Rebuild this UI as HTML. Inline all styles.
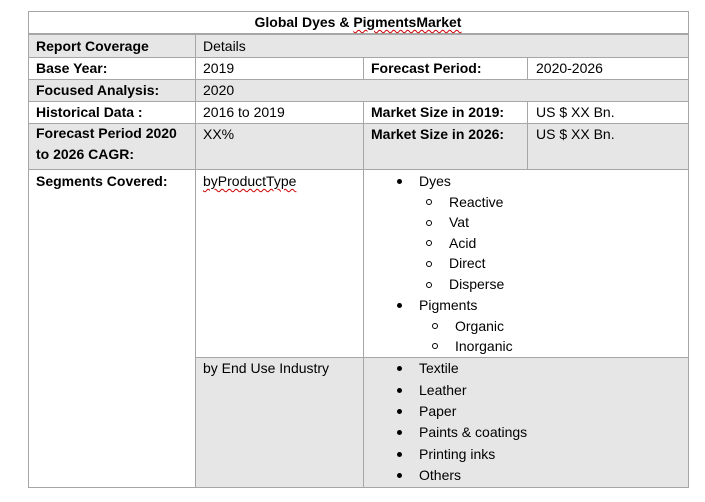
<!DOCTYPE html>
<html><head><style>
body{margin:0;width:705px;height:502px;background:#fff;font-family:"Liberation Sans",sans-serif;font-size:14px;color:#000;position:relative;overflow:hidden}
.b{position:absolute;background:#a6a6a6}
.g{position:absolute;background:#e7e6e6}
.t{position:absolute;white-space:nowrap;line-height:16px}
.bd{font-weight:bold}
.dot{position:absolute;width:5px;height:5px;border-radius:50%;background:#000}
.cir{position:absolute;width:6px;height:6px;border-radius:50%;border:1.3px solid #000;box-sizing:border-box}
.u{text-decoration:underline wavy #c00;text-decoration-thickness:1px;text-underline-offset:2px}
</style></head><body>
<div class="g" style="left:28px;top:35px;width:660px;height:22px"></div>
<div class="g" style="left:28px;top:79px;width:660px;height:22px"></div>
<div class="g" style="left:28px;top:123px;width:660px;height:46px"></div>
<div class="g" style="left:195px;top:357px;width:493px;height:130px"></div>

<div class="b" style="left:28px;top:11px;width:661px;height:1px"></div>
<div class="b" style="left:28px;top:33px;width:661px;height:2px"></div>
<div class="b" style="left:28px;top:57px;width:661px;height:1px"></div>
<div class="b" style="left:28px;top:79px;width:661px;height:1px"></div>
<div class="b" style="left:28px;top:101px;width:661px;height:1px"></div>
<div class="b" style="left:28px;top:123px;width:661px;height:1px"></div>
<div class="b" style="left:28px;top:169px;width:661px;height:1px"></div>
<div class="b" style="left:195px;top:357px;width:494px;height:1px"></div>
<div class="b" style="left:28px;top:487px;width:661px;height:1px"></div>
<div class="b" style="left:28px;top:11px;width:1px;height:477px"></div>
<div class="b" style="left:688px;top:11px;width:1px;height:477px"></div>
<div class="b" style="left:195px;top:35px;width:1px;height:452px"></div>
<div class="b" style="left:363px;top:57px;width:1px;height:22px"></div>
<div class="b" style="left:363px;top:101px;width:1px;height:386px"></div>
<div class="b" style="left:527px;top:57px;width:1px;height:22px"></div>
<div class="b" style="left:527px;top:101px;width:1px;height:68px"></div>

<div class="t bd" style="left:0;width:716px;text-align:center;top:14px">Global Dyes &amp; <span class="u">PigmentsMarket</span></div>
<div class="t bd" style="left:36px;top:38px">Report Coverage</div>
<div class="t" style="left:203px;top:38px">Details</div>
<div class="t bd" style="left:36px;top:60px">Base Year:</div>
<div class="t" style="left:203px;top:60px">2019</div>
<div class="t bd" style="left:371px;top:60px">Forecast Period:</div>
<div class="t" style="left:536px;top:60px">2020-2026</div>
<div class="t bd" style="left:36px;top:82px">Focused Analysis:</div>
<div class="t" style="left:203px;top:82px">2020</div>
<div class="t bd" style="left:36px;top:104px">Historical Data :</div>
<div class="t" style="left:203px;top:104px">2016 to 2019</div>
<div class="t bd" style="left:371px;top:104px">Market Size in 2019:</div>
<div class="t" style="left:536px;top:104px">US $ XX Bn.</div>
<div class="t bd" style="left:36px;top:123px;line-height:21px">Forecast Period 2020<br>to 2026 CAGR:</div>
<div class="t" style="left:203px;top:126px">XX%</div>
<div class="t bd" style="left:371px;top:126px">Market Size in 2026:</div>
<div class="t" style="left:536px;top:126px">US $ XX Bn.</div>
<div class="t bd" style="left:36px;top:173px">Segments Covered:</div>
<div class="t" style="left:203px;top:173px"><span class="u">byProductType</span></div>
<div class="t" style="left:203px;top:360px">by End Use Industry</div>

<div class="dot" style="left:397px;top:179px"></div><div class="t" style="left:419px;top:173px">Dyes</div>
<div class="cir" style="left:426px;top:199px"></div><div class="t" style="left:449px;top:194px">Reactive</div>
<div class="cir" style="left:426px;top:220px"></div><div class="t" style="left:449px;top:214px">Vat</div>
<div class="cir" style="left:426px;top:240px"></div><div class="t" style="left:449px;top:235px">Acid</div>
<div class="cir" style="left:426px;top:261px"></div><div class="t" style="left:449px;top:255px">Direct</div>
<div class="cir" style="left:426px;top:282px"></div><div class="t" style="left:449px;top:276px">Disperse</div>
<div class="dot" style="left:397px;top:303px"></div><div class="t" style="left:419px;top:297px">Pigments</div>
<div class="cir" style="left:432px;top:323px"></div><div class="t" style="left:455px;top:318px">Organic</div>
<div class="cir" style="left:432px;top:343px"></div><div class="t" style="left:455px;top:338px">Inorganic</div>

<div class="dot" style="left:397px;top:366px"></div><div class="t" style="left:419px;top:360px">Textile</div>
<div class="dot" style="left:397px;top:388px"></div><div class="t" style="left:419px;top:382px">Leather</div>
<div class="dot" style="left:397px;top:409px"></div><div class="t" style="left:419px;top:403px">Paper</div>
<div class="dot" style="left:397px;top:430px"></div><div class="t" style="left:419px;top:424px">Paints &amp; coatings</div>
<div class="dot" style="left:397px;top:452px"></div><div class="t" style="left:419px;top:446px">Printing inks</div>
<div class="dot" style="left:397px;top:473px"></div><div class="t" style="left:419px;top:467px">Others</div>
</body></html>
